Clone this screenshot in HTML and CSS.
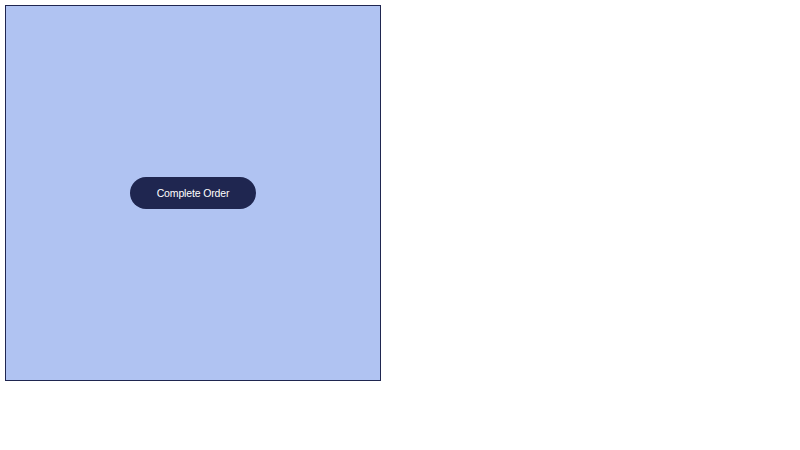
FILE: index.html
```html
<!DOCTYPE html>
<html>
<head>
<meta charset="utf-8">
<link rel="stylesheet" href="styles.css">
</head>
<body>
<div class="panel">
  <button class="btn">Complete Order</button>
</div>
</body>
</html>
```
FILE: styles.css
```css
html, body {
  margin: 0;
  padding: 0;
  background: #ffffff;
}
body {
  padding: 5px;
}
.panel {
  width: 374px;
  height: 374px;
  border: 1px solid #1f2650;
  background: #b0c3f2;
  display: flex;
  align-items: center;
  justify-content: center;
}
.btn {
  width: 126px;
  height: 32px;
  border: none;
  border-radius: 16px;
  background: #1f2650;
  color: #ffffff;
  font-family: "Liberation Sans", Arial, sans-serif;
  font-size: 10.5px;
  letter-spacing: -0.15px;
  padding: 0;
  cursor: pointer;
}
```
